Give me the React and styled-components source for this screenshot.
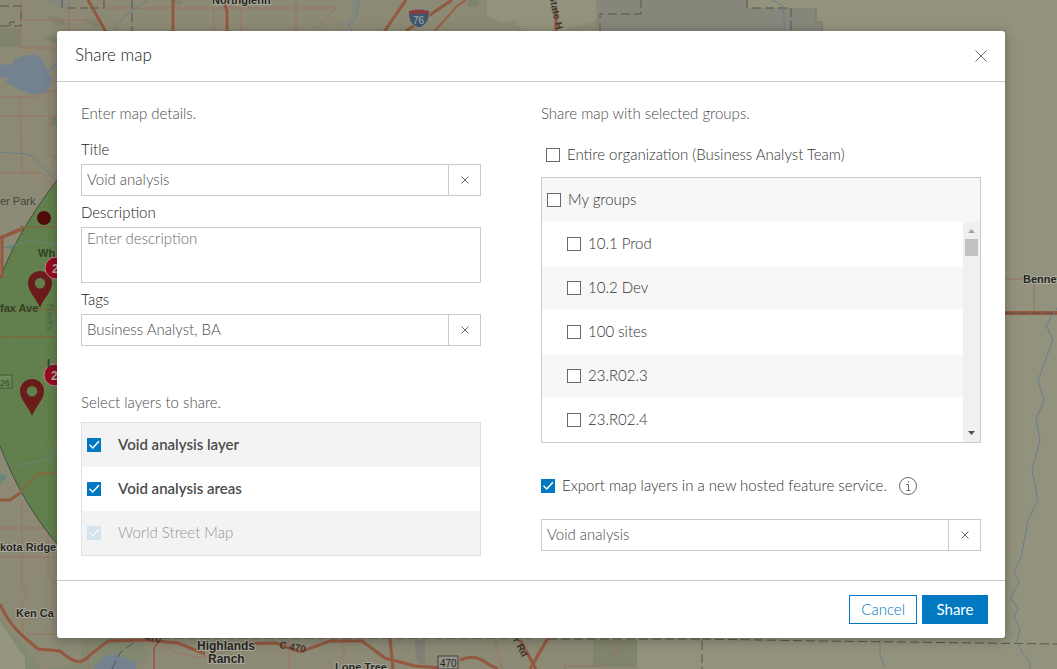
import React, { useState } from "react";
import styled, { createGlobalStyle, css } from "styled-components";

const GlobalStyle = createGlobalStyle`
  * { box-sizing: border-box; }
  html, body { margin: 0; }
  body, button, input, textarea {
    font-family: Lato, "Liberation Sans", sans-serif;
    font-size: 15px;
    font-weight: 300;
    line-height: 20px;
  }
`;

const Page = styled.div`
  position: relative;
  min-height: 100vh;
  padding: 31px 52px 31px 57px;
  background: #8c8a75;
  overflow: hidden;
`;

const MapLayer = styled.svg`
  position: absolute;
  inset: 0;
  width: 100%;
  height: 100%;
`;

const Dialog = styled.section`
  position: relative;
  background: #fff;
  border-radius: 3px;
  box-shadow: 0 2px 12px rgba(0, 0, 0, 0.3);
  color: #323232;
`;

const Header = styled.header`
  display: flex;
  align-items: center;
  justify-content: space-between;
  height: 51px;
  padding: 0 18px;
  border-bottom: 1px solid #cacaca;
`;

const Heading = styled.h1`
  margin: 0;
  padding-bottom: 2px;
  font-size: 17px;
  line-height: 24px;
  font-weight: 300;
  color: #222;
`;

const CloseButton = styled.button`
  display: flex;
  padding: 0;
  border: 0;
  background: none;
  color: #6a6a6a;
  cursor: pointer;
`;

const Body = styled.form`
  display: grid;
  grid-template-columns: 400fr 440fr;
  gap: 60px;
  padding: 21px 24px 24px;
`;

const Column = styled.div`
  display: flex;
  flex-direction: column;
  min-width: 0;
`;

const Hint = styled.p`
  margin: 0;
  color: #4c4c4c;
`;

const Fields = styled.div`
  display: flex;
  flex-direction: column;
  gap: 6px;
  margin: 16px 0 46px;
`;

const Field = styled.div`
  display: flex;
  flex-direction: column;
  gap: 5px;
  color: #222;
`;

const InputGroup = styled.div`
  display: flex;
  height: 32px;
  border: 1px solid #cacaca;
`;

const TextInput = styled.input`
  flex: 1;
  min-width: 0;
  padding: 0 5px 2px;
  border: 0;
  outline: 0;
  color: #4c4c4c;
  background: #fff;
`;

const ClearButton = styled.button`
  display: flex;
  align-items: center;
  justify-content: center;
  width: 32px;
  padding: 0;
  border: 0;
  border-left: 1px solid #cacaca;
  background: #fff;
  color: #6a6a6a;
  cursor: pointer;
`;

const TextArea = styled.textarea`
  height: 56px;
  padding: 0 5px;
  border: 1px solid #cacaca;
  outline: 0;
  resize: none;
  color: #4c4c4c;
  &::placeholder { color: #6a6a6a; opacity: 1; }
`;

const Checkbox = styled.input.attrs({ type: "checkbox" })`
  appearance: none;
  flex: none;
  width: 14px;
  height: 14px;
  margin: 0;
  border: 1px solid #6a6a6a;
  background: #fff;
  &:checked {
    border-color: #0079c1;
    background: #0079c1;
  }
  &:checked::before {
    content: "";
    display: block;
    width: 12px;
    height: 12px;
    background: #fff;
    clip-path: polygon(8% 52%, 17% 44%, 39% 66%, 86% 14%, 96% 22%, 40% 84%);
  }
  &:disabled { opacity: 0.12; }
`;

const CheckText = styled.span`
  padding-bottom: 2px;
`;

const LayerList = styled.div`
  margin-top: 10px;
  border: 1px solid #dfe0e6;
`;

const LayerRow = styled.label`
  display: flex;
  align-items: center;
  gap: 17px;
  height: 44px;
  padding: 0 5px;
  font-weight: 600;
  color: #4c4c4c;
  &:nth-child(odd) { background: #f3f3f3; }
  ${(p) => p.$disabled && css`
    font-weight: 300;
    color: #959595;
  `}
`;

const CheckLine = styled.label`
  display: flex;
  align-items: center;
  gap: 7px;
`;

const OrgLine = styled(CheckLine)`
  margin: 21px 0 11px;
  padding-left: 5px;
`;

const GroupBox = styled.div`
  border: 1px solid #cacaca;
`;

const GroupHead = styled(CheckLine)`
  height: 44px;
  padding: 0 5px;
  background: #f7f7f7;
`;

const GroupScroll = styled.div`
  display: flex;
`;

const GroupList = styled.div`
  flex: 1;
  min-width: 0;
`;

const GroupRow = styled(CheckLine)`
  height: 44px;
  padding: 0 25px;
  &:nth-child(even) { background: #f7f7f7; }
`;

const ScrollTrack = styled.div`
  display: flex;
  flex-direction: column;
  justify-content: space-between;
  align-items: center;
  width: 17px;
  background: #f0f0f0;
`;

const ScrollArrow = styled.svg`
  width: 17px;
  height: 17px;
`;

const ScrollThumb = styled.div`
  width: 13px;
  height: 17px;
  margin-bottom: auto;
  background: #c1c1c1;
`;

const ExportLine = styled.div`
  display: flex;
  align-items: center;
  gap: 12px;
  margin: 32px 0 22px;
`;

const InfoButton = styled(CloseButton)``;

const Footer = styled.footer`
  display: flex;
  justify-content: flex-end;
  gap: 5px;
  padding: 14px 17px;
  border-top: 1px solid #cacaca;
`;

const ActionButton = styled.button`
  height: 29px;
  min-width: 66px;
  padding: 0 11px 2px;
  border: 1px solid #0079c1;
  cursor: pointer;
  font-weight: ${(p) => (p.$primary ? 400 : 300)};
  color: ${(p) => (p.$primary ? "#fff" : "#0079c1")};
  background: ${(p) => (p.$primary ? "#0079c1" : "#fff")};
`;

function Cross({ size }) {
  return (
    <svg width={size} height={size} viewBox={`0 0 ${size} ${size}`} aria-hidden="true">
      <path d={`M.5 .5L${size - 0.5} ${size - 0.5}M${size - 0.5} .5L.5 ${size - 0.5}`} stroke="currentColor" fill="none" />
    </svg>
  );
}

function ClearableInput({ id, initial, label }) {
  const [value, setValue] = useState(initial);
  return (
    <InputGroup>
      <TextInput id={id} aria-label={label} value={value} onChange={(e) => setValue(e.target.value)} />
      <ClearButton type="button" aria-label="Clear" onClick={() => setValue("")}>
        <Cross size={8} />
      </ClearButton>
    </InputGroup>
  );
}

function Pin({ x, y }) {
  return (
    <path
      transform={`translate(${x} ${y})`}
      fill="#691c19"
      fillRule="evenodd"
      d="M0 0C-3-9-12-16-12-25A12 12 0 0 1 12-25C12-16 3-9 0 0ZM0-30A5.300 5.300 0 1 0 0-19.400A5.300 5.300 0 1 0 0-30Z"
    />
  );
}

function BackgroundMap() {
  const halo = { stroke: "#aaa99c", strokeWidth: 2, paintOrder: "stroke", fill: "#262622" };
  return (
    <MapLayer viewBox="0 0 1057 669" preserveAspectRatio="xMidYMid slice" aria-hidden="true" fontFamily="Liberation Sans, sans-serif">
      <rect width="1057" height="669" fill="#8c8a75" />
      <path d="M487 0H1057V669H640L600 640V20L530 40L514 20L503 22L487 16Z" fill="#93927d" />
      <path d="M596 0H747V8H816V22H822V40H596Z" fill="#86867a" />
      <path d="M816 8V22H822V34" fill="none" stroke="#74746a" />
      <path d="M0 28H21V47H0ZM45 14L62 18L66 24L56 26ZM82 20L102 18L98 28ZM44 38L57 36V44ZM170 0H184L180 6ZM468 0H478V7H468ZM50 117L57 116V125L50 126ZM593 640H637V667H593Z" fill="#7f846b" />
      <path d="M0 618L20 640L40 669H0ZM84 638H140L150 655L135 669H45L80 664Z" fill="#838870" />
      <path d="M0 622L25 658V669H0Z" fill="#96957f" />
      <path d="M44 0H68L70 10L55 5ZM352 0H360L358 14L350 25H336L350 20Z" fill="#86887c" />
      <path d="M0 65L12 64L14 59L24 56L36 54L43 60L52 80L47 93L33 94L20 90L6 82L8 78L0 77ZM94 669L103 657L114 654L136 663V669Z" fill="#73828e" />
      <path d="M48 72L57 64" stroke="#73828e" strokeWidth="2" />
      <path d="M0 97H20C32 99 40 94 57 90M20 97L22 173M49 90V155L57 158M0 116H57M0 173H42L57 189M20 20H90M69 0V31M21 0V48H57M0 528H57M0 557H57M22 500V585L27 592L22 604V630L30 634H57M48 510V575L57 584M88 640V669M160 640L175 652L200 658L250 645M289 640V669M340 640L345 652L339 660M565 669V666H600L616 654L620 642L614 640M1005 279H1024M1034 284V312M100 8H336L318 28M214 8V32M241 8V32M296 0V32M495 640L502 669" fill="none" stroke="#9c7263" />
      <path d="M88 0L106 32M0 238L20 230L57 226M0 604C10 628 28 640 38 649L60 651C76 665 82 664 90 655L108 641L145 640L178 643L205 654M205 645L276 643L300 652L330 641H362L385 658L415 666L455 669M390 638L393 669M460 660C480 652 484 664 498 669M384 32L406 0M406 31L452 0M556 8V32M548 638L530 669M520 640L536 669" fill="none" stroke="#93583f" strokeWidth="3" />
      <path d="M435 31L457 6L466 0M154 669V648L160 640" fill="none" stroke="#976048" strokeWidth="2" />
      <path d="M173 0V32M225 4L227 12V32" fill="none" stroke="#93583f" strokeWidth="3" />
      <path d="M1005 313H1057" stroke="#93583f" strokeWidth="4" />
      <path d="M1005 313H1057" stroke="#55554c" strokeDasharray="10 3" />
      <path d="M0 6H21V26H10V22H16M0 26H10M62 0V8H88M104 0V8H88M132 0V32M600 32V14H641V0M747 0V8H791V32M148 638H530M548 639H702V669M702 639L820 641L1057 644M112 669L120 653L137 640" fill="none" stroke="#56564c" strokeDasharray="9 4" />
      <path d="M148 0L126 15L118 24L115 32M0 152C20 155 28 150 38 162L55 180M359 0L356 18L349 25L352 32M772 0L783 6L785 32M1057 308L1046 325L1053 340L1038 380L1044 400L1036 420L1040 440L1032 470L1038 500L1028 520L1021 558L1014 571L1019 582L1011 598L1018 609L1014 618L1020 628L1017 642L1023 654L1030 661V669M880 640V655L885 666" fill="none" stroke="#687f8d" />
      <path d="M57 180C38 206 17 235 0 278V446C16 486 32 514 57 544Z" fill="#61804d" />
      <path d="M57 180C38 206 17 235 0 278M0 446C16 486 32 514 57 544" fill="none" stroke="#454b3d" />
      <path d="M3 248L30 241L57 244M17 466L40 461L57 454" fill="none" stroke="#69847b" />
      <path d="M0 474L8 476L0 484ZM4 248L14 244L12 249Z" fill="#69847b" />
      <path d="M20 227H57M0 337H57M0 310H57" fill="none" stroke="#776f3f" strokeWidth="2" />
      <path d="M2 238V278M0 500H10L20 493M0 238L20 229" fill="none" stroke="#93583f" strokeWidth="3" />
      <path d="M20 493L37 474L57 473" fill="none" stroke="#776f3f" strokeWidth="3" />
      <path d="M15 288V340M33 416L35 432L43 447M5 447L30 453L57 441M42 345V410M57 366L42 395" fill="none" stroke="#70804a" />
      <circle cx="44" cy="218" r="7" fill="#4f0c0a" />
      <Pin x={40} y={308} />
      <Pin x={32} y={416} />
      <g fill="#960c20" stroke="#b28e8b">
        <circle cx="56" cy="268" r="11" />
        <circle cx="55" cy="375" r="11" />
      </g>
      <g fill="#b9a9a5" fontSize="12" fontWeight="700">
        <text x="52" y="273">2</text>
        <text x="51" y="380">2</text>
      </g>
      <g fontSize="11" fontWeight="700" fill="#2f4327">
        <text x="0" y="205" fontWeight="400" fill="#45453c">er Park</text>
        <text x="38" y="257">Wh</text>
        <text x="0" y="312">fax Ave</text>
        <text x="47" y="367">L</text>
        <text fontSize="9" fontWeight="400" fill="#50683f" transform="translate(52 331) rotate(-90)">Kipling</text>
      </g>
      <rect x="-4" y="375" width="16" height="13" fill="#6b8b58" stroke="#3f5534" />
      <text x="0" y="386" fontSize="9" fill="#33452b">26</text>
      <g fontWeight="700" fontSize="11" {...halo}>
        <text x="0" y="551">kota Ridge</text>
        <text x="16" y="617">Ken Ca</text>
        <text x="212" y="4">Northglenn</text>
        <text x="1023" y="283">Bennett</text>
        <text x="197" y="650" fontSize="12">Highlands</text>
        <text x="208" y="663" fontSize="12">Ranch</text>
        <text x="335" y="671">Lone Tree</text>
      </g>
      <g fontSize="10" fontWeight="700" fill="#3f362e">
        <text transform="translate(144 640) rotate(10)">470</text>
        <text transform="translate(279 648) rotate(10)">C 470</text>
        <text transform="translate(549 -4) rotate(78)">State H</text>
        <text transform="translate(513 640) rotate(62)">r Rd</text>
      </g>
      <path d="M415 640H425V662L421 665L416 660Z" fill="#7f7f75" />
      <rect x="438" y="656" width="20" height="13" fill="#929289" stroke="#44443f" />
      <text x="440" y="667" fontSize="10" fill="#262622">470</text>
      <path d="M409 11Q419 8 429 11C431 21 424 26 419 28C413 26 407 21 409 11Z" fill="#40566d" stroke="#8b8b88" />
      <path d="M409 11Q419 8 429 11V14H409Z" fill="#853d40" />
      <text x="413" y="24" fontSize="10" fill="#a9adab">76</text>
    </MapLayer>
  );
}

const layers = [
  { name: "Void analysis layer" },
  { name: "Void analysis areas" },
  { name: "World Street Map", disabled: true },
];
const groups = ["10.1 Prod", "10.2 Dev", "100 sites", "23.R02.3", "23.R02.4"];

export default function App() {
  return (
    <Page>
      <GlobalStyle />
      <BackgroundMap />
      <Dialog role="dialog" aria-labelledby="share-heading">
        <Header>
          <Heading id="share-heading">Share map</Heading>
          <CloseButton type="button" aria-label="Close">
            <Cross size={12} />
          </CloseButton>
        </Header>
        <Body>
          <Column>
            <Hint>Enter map details.</Hint>
            <Fields>
              <Field>
                <label htmlFor="title">Title</label>
                <ClearableInput id="title" initial="Void analysis" />
              </Field>
              <Field>
                <label htmlFor="description">Description</label>
                <TextArea id="description" placeholder="Enter description" />
              </Field>
              <Field>
                <label htmlFor="tags">Tags</label>
                <ClearableInput id="tags" initial="Business Analyst, BA" />
              </Field>
            </Fields>
            <Hint>Select layers to share.</Hint>
            <LayerList>
              {layers.map((layer) => (
                <LayerRow key={layer.name} $disabled={layer.disabled}>
                  <Checkbox defaultChecked disabled={layer.disabled} />
                  <CheckText>{layer.name}</CheckText>
                </LayerRow>
              ))}
            </LayerList>
          </Column>
          <Column>
            <Hint>Share map with selected groups.</Hint>
            <OrgLine>
              <Checkbox />
              <CheckText>Entire organization (Business Analyst Team)</CheckText>
            </OrgLine>
            <GroupBox>
              <GroupHead>
                <Checkbox />
                <CheckText>My groups</CheckText>
              </GroupHead>
              <GroupScroll>
                <GroupList>
                  {groups.map((name) => (
                    <GroupRow key={name}>
                      <Checkbox />
                      <CheckText>{name}</CheckText>
                    </GroupRow>
                  ))}
                </GroupList>
                <ScrollTrack aria-hidden="true">
                  <ScrollArrow viewBox="0 0 17 17"><path d="M5 11L8.500 7L12 11Z" fill="#a3a3a3" /></ScrollArrow>
                  <ScrollThumb />
                  <ScrollArrow viewBox="0 0 17 17"><path d="M5 6L8.500 10L12 6Z" fill="#505050" /></ScrollArrow>
                </ScrollTrack>
              </GroupScroll>
            </GroupBox>
            <ExportLine>
              <CheckLine>
                <Checkbox defaultChecked />
                <CheckText>Export map layers in a new hosted feature service.</CheckText>
              </CheckLine>
              <InfoButton type="button" aria-label="More information">
                <svg width="18" height="18" viewBox="0 0 18 18" fill="none" stroke="currentColor" aria-hidden="true">
                  <circle cx="9" cy="9" r="8.500" />
                  <path d="M7 7.500H9.500V13.500M7.500 13.500H11.500M9.500 4V5.500" />
                </svg>
              </InfoButton>
            </ExportLine>
            <ClearableInput initial="Void analysis" label="Feature service name" />
          </Column>
        </Body>
        <Footer>
          <ActionButton type="button">Cancel</ActionButton>
          <ActionButton type="button" $primary>Share</ActionButton>
        </Footer>
      </Dialog>
    </Page>
  );
}
